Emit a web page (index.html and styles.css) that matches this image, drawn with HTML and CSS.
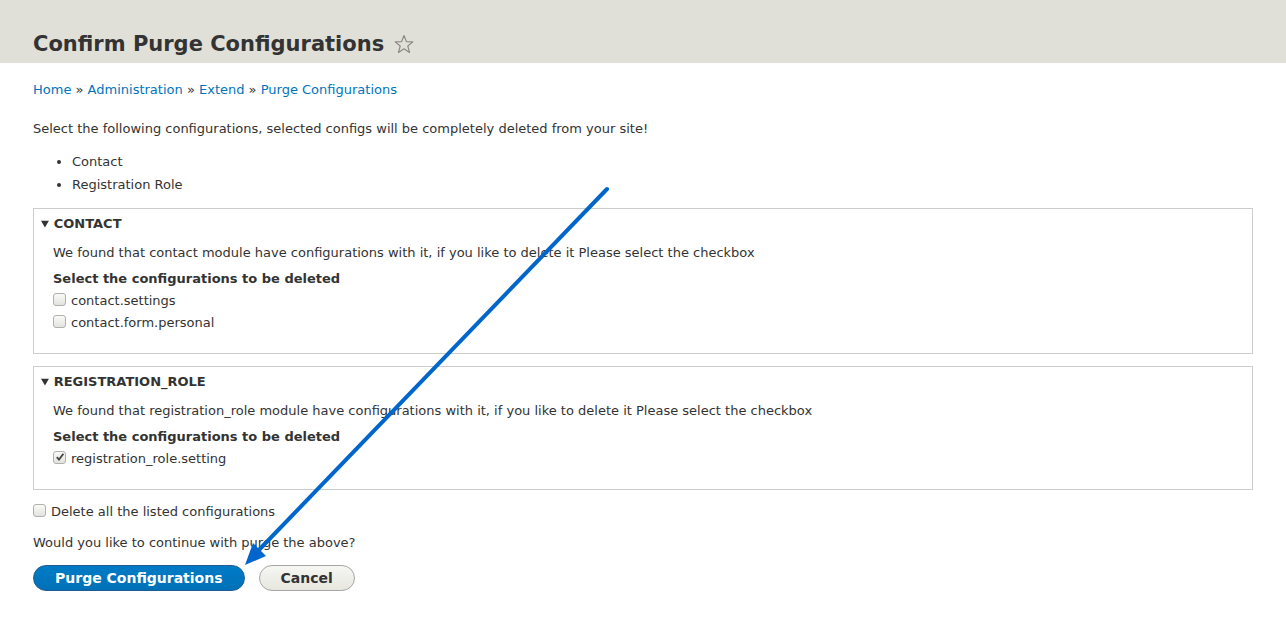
FILE: index.html
```html
<!DOCTYPE html>
<html>
<head>
<meta charset="utf-8">
<title>Confirm Purge Configurations</title>
<link rel="stylesheet" href="styles.css">
</head>
<body>
<header class="page-header">
  <div class="container">
    <h1 class="page-title">Confirm Purge Configurations <svg class="star" width="20" height="20" viewBox="0 0 20 20"><path d="M10 1.5 L12.4 7.6 L18.8 7.9 L13.8 12 L15.5 18.4 L10 14.8 L4.5 18.4 L6.2 12 L1.2 7.9 L7.6 7.6 Z" fill="none" stroke="#8a8a80" stroke-width="1.2" stroke-linejoin="round"/></svg></h1>
  </div>
</header>
<main class="container content">
  <nav class="breadcrumb"><a href="#">Home</a> » <a href="#">Administration</a> » <a href="#">Extend</a> » <a href="#">Purge Configurations</a></nav>
  <p class="intro">Select the following configurations, selected configs will be completely deleted from your site!</p>
  <ul class="modules">
    <li>Contact</li>
    <li>Registration Role</li>
  </ul>
  <details class="box" open>
    <summary>CONTACT</summary>
    <div class="box-body">
      <p class="desc">We found that contact module have configurations with it, if you like to delete it Please select the checkbox</p>
      <div class="label">Select the configurations to be deleted</div>
      <div class="check"><span class="cb"></span><span>contact.settings</span></div>
      <div class="check"><span class="cb"></span><span>contact.form.personal</span></div>
    </div>
  </details>
  <details class="box" open>
    <summary>REGISTRATION_ROLE</summary>
    <div class="box-body">
      <p class="desc">We found that registration_role module have configurations with it, if you like to delete it Please select the checkbox</p>
      <div class="label">Select the configurations to be deleted</div>
      <div class="check"><span class="cb checked"><svg width="10" height="10" viewBox="0 0 10 10"><path d="M1.8 5.2 L4 7.6 L8.4 1.8" fill="none" stroke="#444" stroke-width="1.8"/></svg></span><span>registration_role.setting</span></div>
    </div>
  </details>
  <div class="check all"><span class="cb"></span><span>Delete all the listed configurations</span></div>
  <p class="question">Would you like to continue with purge the above?</p>
  <div class="actions">
    <button class="btn primary">Purge Configurations</button>
    <button class="btn">Cancel</button>
  </div>
</main>
<svg class="arrow" width="1286" height="639" viewBox="0 0 1286 639">
  <line x1="607" y1="189" x2="257" y2="552" stroke="#0066cc" stroke-width="4" stroke-linecap="round"/>
  <polygon points="245,565 253,543 266,556" fill="#0066cc"/>
</svg>
</body>
</html>
```
FILE: styles.css
```css
html, body {
  margin: 0;
  padding: 0;
  background: #fff;
}
body {
  font-family: "DejaVu Sans", "Liberation Sans", sans-serif;
  font-size: 13px;
  line-height: 20px;
  color: #333;
  position: relative;
  min-height: 639px;
}
.container {
  padding: 0 33px;
}
.page-header {
  background: #e0e0d8;
  height: 63px;
  box-sizing: border-box;
  padding-top: 30px;
}
.page-title {
  margin: 0;
  font-size: 21px;
  line-height: 28px;
  font-weight: bold;
  color: #333;
  display: flex;
  align-items: center;
}
.star {
  margin-left: 10px;
  margin-top: -1px;
}
.content {
  padding-top: 17px;
}
.breadcrumb a {
  color: #0074bd;
  text-decoration: none;
}
.breadcrumb {
  margin: 0;
}
.intro {
  margin: 19px 0 13px;
}
.modules {
  margin: 0 0 13px;
  padding-left: 39px;
}
.modules li {
  margin-bottom: 3px;
}
.box {
  border: 1px solid #ccc;
  margin: 0 0 12px;
  padding: 0;
}
.box summary {
  font-weight: bold;
  padding: 5px 7px 0;
  line-height: 20px;
  cursor: pointer;
}
.box summary::marker {
  font-size: 12px;
}
.box-body {
  padding: 9px 19px 19px;
}
.desc {
  margin: 0 0 6px;
}
.label {
  font-weight: bold;
  margin-bottom: 1px;
}
.check {
  display: flex;
  align-items: center;
  height: 22px;
}
.cb {
  box-sizing: border-box;
  width: 13px;
  height: 13px;
  border: 1px solid #b0b0ac;
  border-radius: 3px;
  background: linear-gradient(#fafaf8, #e2e2de);
  margin-right: 5px;
  margin-top: -4px;
  display: inline-flex;
  align-items: center;
  justify-content: center;
  flex: none;
}
.check.all {
  margin-top: -1px;
  margin-bottom: 10px;
}
.question {
  margin: 0 0 12px;
}
.actions {
  display: flex;
  gap: 14px;
}
.btn {
  font-family: "DejaVu Sans", "Liberation Sans", sans-serif;
  font-size: 14px;
  font-weight: bold;
  line-height: 18px;
  padding: 3px 21px 3px;
  border-radius: 20px;
  border: 1px solid #a6a6a6;
  background: linear-gradient(#f6f6f3, #e7e7df);
  color: #333;
}
.btn.primary {
  background: linear-gradient(#007bc6, #0071b8);
  border-color: #1e5c90;
  color: #fff;
}
.arrow {
  position: absolute;
  left: 0;
  top: 0;
  pointer-events: none;
}
```
